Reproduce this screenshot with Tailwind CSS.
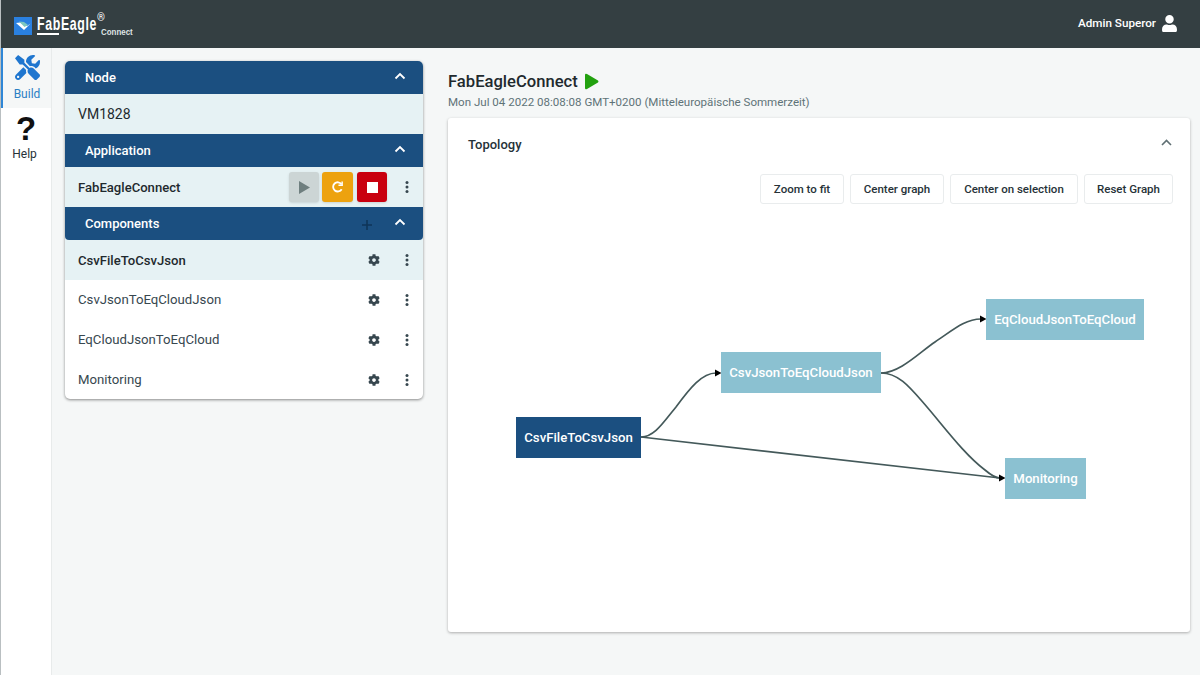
<html lang="en">
<head>
    <meta charset="UTF-8">
    <title>FabEagle Connect</title>
    <script src="https://cdn.jsdelivr.net/npm/@tailwindcss/browser@4"></script>
</head>
<body class="w-[1200px] h-[675px] overflow-hidden bg-[#f5f7f7] font-['Roboto',sans-serif] text-[#263238] border-l border-[#b9bfc1]">
    <!-- top bar -->
    <header class="h-12 bg-[#343f42] flex items-center justify-between pl-[14px] pr-[23px] text-white -ml-px">
        <div class="flex items-center">
            <svg width="18" height="18" viewBox="0 0 18 18" class="mt-[4px]">
                <rect width="18" height="18" fill="#2a80e0"/>
                <path d="M2 6 L6 5.5 L13 9 L16.5 6.5 L10 13 Z" fill="#fff"/>
                <path d="M5 4.5 L10 5 L14 8 L10.5 10 Z" fill="#7cc6c0"/>
            </svg>
            <div class="relative ml-[5px] h-8 w-[100px]">
                <span class="absolute left-0 top-[6px] text-[19px] leading-5 tracking-[1px] font-['Liberation_Sans',sans-serif] font-bold scale-x-[0.65] origin-left whitespace-nowrap">FabEagle</span>
                <span class="absolute left-0 top-[25px] w-[22px] h-[2px] bg-white"></span>
                <span class="absolute left-[60px] top-[5px] text-[10px] leading-[10px]">®</span>
                <span class="absolute left-[64px] top-[18px] text-[9px] leading-3 font-bold font-['Liberation_Sans',sans-serif] text-[#dfe4e5] scale-x-[0.88] origin-left">Connect</span>
            </div>
        </div>
        <div class="flex items-center gap-[6px]">
            <span class="text-[11.7px] font-medium">Admin Superor</span>
            <svg width="15" height="17" viewBox="0 0 448 512" fill="#fff"><path d="M224 256c70.7 0 128-57.3 128-128S294.7 0 224 0 96 57.3 96 128s57.3 128 128 128zm89.6 32h-16.7c-22.2 10.2-46.9 16-72.9 16s-50.6-5.8-72.9-16h-16.7C60.2 288 0 348.2 0 422.4V464c0 26.5 21.5 48 48 48h352c26.5 0 48-21.5 48-48v-41.6c0-74.2-60.2-134.4-134.4-134.4z"/></svg>
        </div>
    </header>

    <div class="flex h-[627px]">
        <!-- side nav -->
        <nav class="w-[51px] shrink-0 bg-white border-r border-[#e8ebeb]">
            <div class="h-[60px] bg-[#f5f7f7] border-l-2 border-[#2f86d6] flex flex-col items-center pt-[7px] text-[#2b7fc4]">
                <svg width="25" height="25" viewBox="0 0 512 512" fill="#1f76cf"><path d="M501.1 395.7L384 278.6c-23.1-23.1-57.6-27.6-85.4-13.9L192 158.1V96L64 0 0 64l96 128h62.1l106.6 106.6c-13.6 27.8-9.2 62.3 13.9 85.4l117.1 117.1c14.6 14.6 38.2 14.6 52.7 0l52.7-52.7c14.5-14.6 14.5-38.2-.1-52.7zM331.7 225c28.3 0 54.9 11 74.9 31l19.4 19.4c15.8-6.9 30.8-16.5 43.8-29.5 37.1-37.1 49.7-89.3 37.9-136.7-2.2-9-13.5-12.1-20.1-5.5l-74.4 74.4-67.9-11.3L334 98.9l74.4-74.4c6.6-6.6 3.4-17.9-5.7-20.2-47.4-11.7-99.6.9-136.6 37.9-28.5 28.5-41.9 66.1-41.2 103.6l82.1 82.1c8.1-1.9 16.5-2.9 24.7-2.9zm-103.9 82l-56.7-56.7L18.7 402.8c-25 25-25 65.5 0 90.5s65.5 25 90.5 0l123.6-123.6c-7.6-19.9-9.9-41.6-5-62.7zM64 472c-13.2 0-24-10.8-24-24 0-13.3 10.7-24 24-24s24 10.7 24 24c0 13.2-10.7 24-24 24z"/></svg>
                <span class="text-[12px] leading-4 mt-[6px]">Build</span>
            </div>
            <div class="h-[61px] flex flex-col items-center pt-[6px]">
                <span class="text-[33px] leading-[30px] font-['Liberation_Sans',sans-serif] font-bold text-[#111]">?</span>
                <span class="text-[12px] leading-4 mt-[2px] -ml-[3px]">Help</span>
            </div>
        </nav>

        <!-- left panel -->
        <aside class="w-[358px] ml-[13px] mt-[13px] self-start rounded-[5px] bg-white shadow-[0_1px_3px_rgba(0,0,0,0.45)] overflow-hidden text-[13.2px]">
            <div class="h-[33px] bg-[#1b4f80] text-white font-medium text-[13px] flex items-center justify-between pl-5 pr-[17px]">
                <span>Node</span>
                <svg class="-mt-[3px]" width="12" height="8" viewBox="0 0 12 8" fill="none" stroke="#fff" stroke-width="1.8"><path d="M1.5 6.5 L6 2 L10.5 6.5"/></svg>
            </div>
            <div class="h-10 bg-[#e6f2f4] flex items-center pl-[13px] text-[14px] text-[#1f2a2e]">VM1828</div>
            <div class="h-[33px] bg-[#1b4f80] text-white font-medium text-[13px] flex items-center justify-between pl-5 pr-[17px]">
                <span>Application</span>
                <svg class="-mt-[3px]" width="12" height="8" viewBox="0 0 12 8" fill="none" stroke="#fff" stroke-width="1.8"><path d="M1.5 6.5 L6 2 L10.5 6.5"/></svg>
            </div>
            <div class="h-10 bg-[#e6f2f4] flex items-center pl-[13px] pr-[14px] font-medium text-[13.1px] text-[#1f2a2e]">
                <span class="flex-1 pt-px">FabEagleConnect</span>
                <div class="flex">
                    <div class="w-[30px] h-[30px] rounded-[3px] bg-[#ccd5d5] shadow-sm flex items-center justify-center">
                        <svg width="11" height="13" viewBox="0 0 11 13" fill="#6f7f7f"><path d="M0 0 L11 6.5 L0 13 Z"/></svg>
                    </div>
                    <div class="w-[31px] h-[30px] ml-[3px] rounded-[3px] bg-[#eda20f] shadow-sm flex items-center justify-center">
                        <svg width="12" height="12" viewBox="0 0 13 13" fill="none" stroke="#fff" stroke-width="2"><path d="M10.5 9 A5 5 0 1 1 10.3 3.5"/><path d="M11 0.5 V4.5 H7" stroke-width="1.6"/></svg>
                    </div>
                    <div class="w-[30px] h-[30px] ml-[4px] rounded-[3px] bg-[#c9000f] shadow-sm flex items-center justify-center">
                        <div class="w-[11px] h-[11px] bg-white"></div>
                    </div>
                </div>
                <svg class="ml-[18px]" width="4" height="12" viewBox="0 0 4 12" fill="#37474f"><circle cx="2" cy="1.5" r="1.5"/><circle cx="2" cy="6" r="1.5"/><circle cx="2" cy="10.5" r="1.5"/></svg>
            </div>
            <div class="bg-[#e6f2f4]">
                <div class="h-[33px] bg-[#1b4f80] rounded-b-[4px] text-white font-medium text-[13px] flex items-center pl-5 pr-[17px]">
                    <span class="flex-1">Components</span>
                    <svg class="mr-[22px] mt-[3px]" width="10" height="10" viewBox="0 0 10 10" stroke="#0f3558" stroke-width="1.6"><path d="M5 0 V10 M0 5 H10"/></svg>
                    <svg class="-mt-[3px]" width="12" height="8" viewBox="0 0 12 8" fill="none" stroke="#fff" stroke-width="1.8"><path d="M1.5 6.5 L6 2 L10.5 6.5"/></svg>
                </div>
            </div>
            <div class="h-10 bg-[#e6f2f4] flex items-center pl-[13px] pr-[14px] text-[#1f2a2e]">
                <span class="flex-1 text-[13.1px] font-medium pt-px">CsvFileToCsvJson</span>
                <svg width="12" height="12" viewBox="0 0 512 512" fill="#37474f"><path d="M487.4 315.7l-42.6-24.6c4.3-23.2 4.3-47 0-70.2l42.6-24.6c4.9-2.8 7.1-8.6 5.5-14-11.1-35.6-30-67.8-54.7-94.6-3.8-4.1-10-5.1-14.8-2.3L380.8 110c-17.9-15.4-38.5-27.3-60.8-35.1V25.8c0-5.6-3.9-10.5-9.4-11.7-36.7-8.2-74.3-7.8-109.2 0-5.5 1.2-9.4 6.1-9.4 11.7V75c-22.2 7.9-42.8 19.8-60.8 35.1L88.7 85.5c-4.9-2.8-11-1.9-14.8 2.3-24.7 26.7-43.6 58.9-54.7 94.6-1.7 5.4.6 11.2 5.5 14L67.3 221c-4.3 23.2-4.3 47 0 70.2l-42.6 24.6c-4.9 2.8-7.1 8.6-5.5 14 11.1 35.6 30 67.8 54.7 94.6 3.8 4.1 10 5.1 14.8 2.3l42.6-24.6c17.9 15.4 38.5 27.3 60.8 35.1v49.2c0 5.6 3.9 10.5 9.4 11.7 36.7 8.2 74.3 7.8 109.2 0 5.5-1.2 9.4-6.1 9.4-11.7v-49.2c22.2-7.9 42.8-19.8 60.8-35.1l42.6 24.6c4.9 2.8 11 1.9 14.8-2.3 24.7-26.7 43.6-58.9 54.7-94.6 1.5-5.5-.7-11.3-5.6-14.1zM256 336c-44.1 0-80-35.9-80-80s35.9-80 80-80 80 35.9 80 80-35.9 80-80 80z"/></svg>
                <svg class="ml-[25px]" width="4" height="12" viewBox="0 0 4 12" fill="#37474f"><circle cx="2" cy="1.5" r="1.5"/><circle cx="2" cy="6" r="1.5"/><circle cx="2" cy="10.5" r="1.5"/></svg>
            </div>
            <div class="h-10 flex items-center pl-[13px] pr-[14px] text-[#37474f]">
                <span class="flex-1">CsvJsonToEqCloudJson</span>
                <svg width="12" height="12" viewBox="0 0 512 512" fill="#37474f"><path d="M487.4 315.7l-42.6-24.6c4.3-23.2 4.3-47 0-70.2l42.6-24.6c4.9-2.8 7.1-8.6 5.5-14-11.1-35.6-30-67.8-54.7-94.6-3.8-4.1-10-5.1-14.8-2.3L380.8 110c-17.9-15.4-38.5-27.3-60.8-35.1V25.8c0-5.6-3.9-10.5-9.4-11.7-36.7-8.2-74.3-7.8-109.2 0-5.5 1.2-9.4 6.1-9.4 11.7V75c-22.2 7.9-42.8 19.8-60.8 35.1L88.7 85.5c-4.9-2.8-11-1.9-14.8 2.3-24.7 26.7-43.6 58.9-54.7 94.6-1.7 5.4.6 11.2 5.5 14L67.3 221c-4.3 23.2-4.3 47 0 70.2l-42.6 24.6c-4.9 2.8-7.1 8.6-5.5 14 11.1 35.6 30 67.8 54.7 94.6 3.8 4.1 10 5.1 14.8 2.3l42.6-24.6c17.9 15.4 38.5 27.3 60.8 35.1v49.2c0 5.6 3.9 10.5 9.4 11.7 36.7 8.2 74.3 7.8 109.2 0 5.5-1.2 9.4-6.1 9.4-11.7v-49.2c22.2-7.9 42.8-19.8 60.8-35.1l42.6 24.6c4.9 2.8 11 1.9 14.8-2.3 24.7-26.7 43.6-58.9 54.7-94.6 1.5-5.5-.7-11.3-5.6-14.1zM256 336c-44.1 0-80-35.9-80-80s35.9-80 80-80 80 35.9 80 80-35.9 80-80 80z"/></svg>
                <svg class="ml-[25px]" width="4" height="12" viewBox="0 0 4 12" fill="#37474f"><circle cx="2" cy="1.5" r="1.5"/><circle cx="2" cy="6" r="1.5"/><circle cx="2" cy="10.5" r="1.5"/></svg>
            </div>
            <div class="h-10 flex items-center pl-[13px] pr-[14px] text-[#37474f]">
                <span class="flex-1">EqCloudJsonToEqCloud</span>
                <svg width="12" height="12" viewBox="0 0 512 512" fill="#37474f"><path d="M487.4 315.7l-42.6-24.6c4.3-23.2 4.3-47 0-70.2l42.6-24.6c4.9-2.8 7.1-8.6 5.5-14-11.1-35.6-30-67.8-54.7-94.6-3.8-4.1-10-5.1-14.8-2.3L380.8 110c-17.9-15.4-38.5-27.3-60.8-35.1V25.8c0-5.6-3.9-10.5-9.4-11.7-36.7-8.2-74.3-7.8-109.2 0-5.5 1.2-9.4 6.1-9.4 11.7V75c-22.2 7.9-42.8 19.8-60.8 35.1L88.7 85.5c-4.9-2.8-11-1.9-14.8 2.3-24.7 26.7-43.6 58.9-54.7 94.6-1.7 5.4.6 11.2 5.5 14L67.3 221c-4.3 23.2-4.3 47 0 70.2l-42.6 24.6c-4.9 2.8-7.1 8.6-5.5 14 11.1 35.6 30 67.8 54.7 94.6 3.8 4.1 10 5.1 14.8 2.3l42.6-24.6c17.9 15.4 38.5 27.3 60.8 35.1v49.2c0 5.6 3.9 10.5 9.4 11.7 36.7 8.2 74.3 7.8 109.2 0 5.5-1.2 9.4-6.1 9.4-11.7v-49.2c22.2-7.9 42.8-19.8 60.8-35.1l42.6 24.6c4.9 2.8 11 1.9 14.8-2.3 24.7-26.7 43.6-58.9 54.7-94.6 1.5-5.5-.7-11.3-5.6-14.1zM256 336c-44.1 0-80-35.9-80-80s35.9-80 80-80 80 35.9 80 80-35.9 80-80 80z"/></svg>
                <svg class="ml-[25px]" width="4" height="12" viewBox="0 0 4 12" fill="#37474f"><circle cx="2" cy="1.5" r="1.5"/><circle cx="2" cy="6" r="1.5"/><circle cx="2" cy="10.5" r="1.5"/></svg>
            </div>
            <div class="h-[39px] flex items-center pl-[13px] pr-[14px] text-[#37474f]">
                <span class="flex-1">Monitoring</span>
                <svg width="12" height="12" viewBox="0 0 512 512" fill="#37474f"><path d="M487.4 315.7l-42.6-24.6c4.3-23.2 4.3-47 0-70.2l42.6-24.6c4.9-2.8 7.1-8.6 5.5-14-11.1-35.6-30-67.8-54.7-94.6-3.8-4.1-10-5.1-14.8-2.3L380.8 110c-17.9-15.4-38.5-27.3-60.8-35.1V25.8c0-5.6-3.9-10.5-9.4-11.7-36.7-8.2-74.3-7.8-109.2 0-5.5 1.2-9.4 6.1-9.4 11.7V75c-22.2 7.9-42.8 19.8-60.8 35.1L88.7 85.5c-4.9-2.8-11-1.9-14.8 2.3-24.7 26.7-43.6 58.9-54.7 94.6-1.7 5.4.6 11.2 5.5 14L67.3 221c-4.3 23.2-4.3 47 0 70.2l-42.6 24.6c-4.9 2.8-7.1 8.6-5.5 14 11.1 35.6 30 67.8 54.7 94.6 3.8 4.1 10 5.1 14.8 2.3l42.6-24.6c17.9 15.4 38.5 27.3 60.8 35.1v49.2c0 5.6 3.9 10.5 9.4 11.7 36.7 8.2 74.3 7.8 109.2 0 5.5-1.2 9.4-6.1 9.4-11.7v-49.2c22.2-7.9 42.8-19.8 60.8-35.1l42.6 24.6c4.9 2.8 11 1.9 14.8-2.3 24.7-26.7 43.6-58.9 54.7-94.6 1.5-5.5-.7-11.3-5.6-14.1zM256 336c-44.1 0-80-35.9-80-80s35.9-80 80-80 80 35.9 80 80-35.9 80-80 80z"/></svg>
                <svg class="ml-[25px]" width="4" height="12" viewBox="0 0 4 12" fill="#37474f"><circle cx="2" cy="1.5" r="1.5"/><circle cx="2" cy="6" r="1.5"/><circle cx="2" cy="10.5" r="1.5"/></svg>
            </div>
        </aside>

        <!-- main -->
        <main class="w-[742px] ml-[25px] mt-[22px]">
            <div class="flex items-center h-[22px] gap-[7px]">
                <h1 class="text-[16.6px] text-[#1f2a2e] font-medium pt-[2px]">FabEagleConnect</h1>
                <svg width="15" height="17" viewBox="0 0 15 17" fill="#22a10f" class="-ml-[1px]"><path d="M1 2 Q1 0 3 1 L14 7.5 Q15 8.5 14 9.5 L3 16 Q1 17 1 15 Z"/></svg>
            </div>
            <p class="text-[11.55px] leading-4 mt-[2px] text-[#5f7378]">Mon Jul 04 2022 08:08:08 GMT+0200 (Mitteleuropäische Sommerzeit)</p>
            <section class="relative mt-[8px] h-[514px] bg-white rounded-[3px] shadow-[0_1px_3px_rgba(0,0,0,0.3)]">
                <div class="flex items-center justify-between pl-5 pr-[18px] pt-[19px]">
                    <h2 class="text-[13px] font-medium leading-4 text-[#263238]">Topology</h2>
                    <svg width="11" height="7" viewBox="0 0 11 7" fill="none" stroke="#5f6f73" stroke-width="1.6" class="-mt-[6px]"><path d="M1 6 L5.5 1.5 L10 6"/></svg>
                </div>
                <div class="flex justify-end gap-[6px] pr-[17px] mt-[21px] text-[11.5px] font-medium text-[#263238]">
                    <button class="w-[84px] h-[30px] pt-px bg-white rounded-[3px] border border-[#e9eced]">Zoom to fit</button>
                    <button class="w-[94px] h-[30px] pt-px bg-white rounded-[3px] border border-[#e9eced]">Center graph</button>
                    <button class="w-[128px] h-[30px] pt-px bg-white rounded-[3px] border border-[#e9eced]">Center on selection</button>
                    <button class="w-[89px] h-[30px] pt-px bg-white rounded-[3px] border border-[#e9eced]">Reset Graph</button>
                </div>

                <!-- graph, coords relative to the card -->
                <svg class="absolute left-0 top-0" width="742" height="514" viewBox="0 0 742 514" fill="none" stroke="#44595a" stroke-width="1.7">
                    <path d="M193 319 C207 319 217 302 228 289 C242 270 254 255 268 255"/>
                    <path d="M193 319 L552 360"/>
                    <path d="M433 255 C452 255 472 234 487 224 C505 212 517 201 533 201"/>
                    <path d="M433 255 C452 255 464 272 479 289 C497 310 517 337 537 352 C544 358 549 360 552 360"/>
                    <path d="M267 251.5 L273.5 255 L267 258.5 Z" fill="#000" stroke="none"/>
                    <path d="M532 197.5 L538.5 201 L532 204.5 Z" fill="#000" stroke="none"/>
                    <path d="M551 356.5 L557.5 360 L551 363.5 Z" fill="#000" stroke="none"/>
                </svg>
                <div class="absolute left-[68px] top-[299px] w-[125px] h-[41px] bg-[#1b4f80] text-white font-medium text-[13.2px] flex items-center justify-center">CsvFileToCsvJson</div>
                <div class="absolute left-[273px] top-[234px] w-[160px] h-[41px] bg-[#8bc1d1] text-white font-medium text-[13.2px] flex items-center justify-center">CsvJsonToEqCloudJson</div>
                <div class="absolute left-[538px] top-[181px] w-[158px] h-[41px] bg-[#8bc1d1] text-white font-medium text-[13.2px] flex items-center justify-center">EqCloudJsonToEqCloud</div>
                <div class="absolute left-[557px] top-[340px] w-[81px] h-[41px] bg-[#8bc1d1] text-white font-medium text-[13.2px] flex items-center justify-center">Monitoring</div>
            </section>
        </main>
    </div>
</body>
</html>
